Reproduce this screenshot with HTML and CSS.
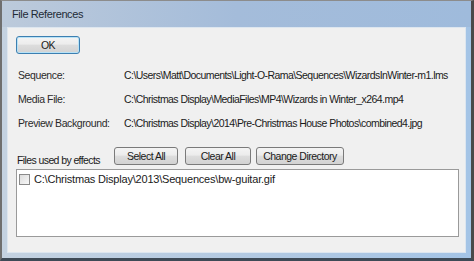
FILE: index.html
```html
<!DOCTYPE html>
<html lang="en">
<head>
    <meta charset="UTF-8">
    <title>File References</title>
    <link rel="stylesheet" href="styles.css">
</head>
<body>
    <div class="window">
        <div class="titlebar">File References</div>
        <div class="client">
            <button class="btn default">OK</button>

            <!-- file paths -->
            <div class="fields">
                <div class="field">
                    <span class="label">Sequence:</span>
                    <span class="value">C:\Users\Matt\Documents\Light-O-Rama\Sequences\WizardsInWinter-m1.lms</span>
                </div>
                <div class="field">
                    <span class="label">Media File:</span>
                    <span class="value">C:\Christmas Display\MediaFiles\MP4\Wizards in Winter_x264.mp4</span>
                </div>
                <div class="field">
                    <span class="label">Preview Background:</span>
                    <span class="value">C:\Christmas Display\2014\Pre-Christmas House Photos\combined4.jpg</span>
                </div>
            </div>

            <div class="effects-bar">
                <span class="effects-label">Files used by effects</span>
                <button class="btn select-all">Select All</button>
                <button class="btn clear-all">Clear All</button>
                <button class="btn change-dir">Change Directory</button>
            </div>

            <div class="listbox">
                <label class="list-item">
                    <span class="checkbox"></span>
                    C:\Christmas Display\2013\Sequences\bw-guitar.gif
                </label>
            </div>
        </div>
    </div>
</body>
</html>
```

FILE: styles.css
```css
/* dialog window */
body {
    margin: 0;
    font-family: "Liberation Sans", Arial, sans-serif;
    font-size: 10.5px;
    color: #1a1a1a;
}

.window {
    width: 474px;
    height: 261px;
    box-sizing: border-box;
    border-left: 2px solid #6f6f6f;
    border-top: 1px solid #8c8c8c;
    border-right: 3px solid #4a4a4a;
    border-bottom: 3px solid #3e4a56;
    background: linear-gradient(90deg, #c4d2e1, #b0c8e2 60%, #a4c4e6);
    padding: 0 5px 5px 5px;
    display: flex;
    flex-direction: column;
}

.titlebar {
    height: 26px;
    flex-shrink: 0;
    margin: 0 -5px;
    padding-left: 10px;
    font-size: 11px;
    line-height: 27px;
    letter-spacing: -0.4px;
    color: #1e2a36;
    background: linear-gradient(90deg, #bccadb, #a4bcda 50%, #9fbbdc);
}

.client {
    flex: 1;
    background: #f0f0f0;
    border: 1px solid #dde6ef;
    padding: 8px 6px 0 8px;
    box-sizing: border-box;
}

.btn {
    font-family: "Liberation Sans", Arial, sans-serif;
    font-size: 10.5px;
    color: #1a1a1a;
    height: 18px;
    padding: 0;
    border: 1px solid #7a7a7a;
    border-radius: 3px;
    background: linear-gradient(180deg, #f4f4f4 0%, #ececec 45%, #dddddd 50%, #d2d2d2 100%);
    letter-spacing: -0.5px;
    white-space: nowrap;
}

.btn.default {
    width: 64px;
    border-color: #3c7fb1;
    box-shadow: inset 0 0 0 1px #b8e2f6;
}

.fields {
    margin-top: 9px;
}

.field {
    display: flex;
    height: 24px;
    align-items: center;
    padding-left: 2px;
    white-space: nowrap;
}

.label {
    width: 106px;
    flex-shrink: 0;
    color: #2a2a2a;
    letter-spacing: -0.4px;
}

.value {
    letter-spacing: -0.55px;
}

.effects-bar {
    display: flex;
    align-items: flex-end;
    margin-top: 11px;
    height: 19px;
}

.effects-label {
    width: 97px;
    flex-shrink: 0;
    padding-left: 1px;
    font-size: 10.5px;
    letter-spacing: -0.6px;
    line-height: 14px;
    margin-bottom: -2px;
    white-space: nowrap;
}

.select-all {
    width: 64px;
}

.clear-all {
    width: 66px;
    margin-left: 7px;
}

.change-dir {
    width: 88px;
    margin-left: 5px;
}

.listbox {
    margin-top: 4px;
    width: 443px;
    height: 68px;
    box-sizing: border-box;
    background: #ffffff;
    border: 1px solid #9a9a9a;
    padding: 2px 1px;
}

.list-item {
    display: flex;
    align-items: center;
    height: 14px;
    font-size: 11px;
    letter-spacing: -0.2px;
    white-space: nowrap;
}

.checkbox {
    width: 9px;
    height: 9px;
    flex-shrink: 0;
    margin: 0 4px 0 1px;
    border: 1px solid #8a8a8a;
    background: linear-gradient(135deg, #dcdcdc, #f8f8f8);
}
```
